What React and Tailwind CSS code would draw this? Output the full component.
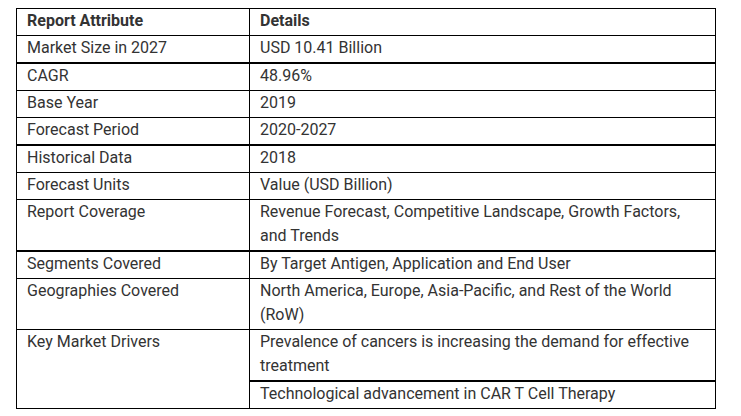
const rows = [
  { attr: "Market Size in 2027", detail: "USD 10.41 Billion", thick: true },
  { attr: "CAGR", detail: "48.96%" },
  { attr: "Base Year", detail: "2019" },
  { attr: "Forecast Period", detail: "2020-2027", thick: true },
  { attr: "Historical Data", detail: "2018" },
  { attr: "Forecast Units", detail: "Value (USD Billion)" },
  {
    attr: "Report Coverage",
    detail: "Revenue Forecast, Competitive Landscape, Growth Factors, and Trends",
    thick: true,
  },
  { attr: "Segments Covered", detail: "By Target Antigen, Application and End User" },
  {
    attr: "Geographies Covered",
    detail: "North America, Europe, Asia-Pacific, and Rest of the World (RoW)",
  },
];

export default function App() {
  return (
    <div
      className="min-h-[416px] w-[741px] bg-white pt-2 pl-4 text-base leading-6 text-[#333]"
      style={{ fontFamily: "Roboto, 'Liberation Sans', sans-serif" }}
    >
      <table className="w-[700px] table-fixed border-collapse border border-black">
        <colgroup>
          <col className="w-[233px]" />
          <col />
        </colgroup>
        <tbody>
          <tr>
            <th className="border border-black pt-0 pb-[2px] pl-2.5 text-left align-top font-bold">
              Report Attribute
            </th>
            <th className="border border-black pt-0 pb-[2px] pl-2.5 text-left align-top font-bold">
              Details
            </th>
          </tr>
          {rows.map((r) => (
            <tr key={r.attr}>
              <td
                className={`border border-black pt-0 pb-[2px] pl-2.5 align-top ${
                  r.thick ? "border-b-2" : ""
                }`}
              >
                {r.attr}
              </td>
              <td
                className={`border border-black pt-0 pb-[2px] pl-2.5 pr-2 align-top ${
                  r.thick ? "border-b-2" : ""
                }`}
              >
                {r.detail}
              </td>
            </tr>
          ))}
          <tr>
            <td rowSpan={2} className="border border-black pt-0 pb-[2px] pl-2.5 align-top">
              Key Market Drivers
            </td>
            <td className="border border-black border-b-2 pt-0 pb-[2px] pl-2.5 pr-2 align-top">
              Prevalence of cancers is increasing the demand for effective treatment
            </td>
          </tr>
          <tr>
            <td className="border border-black pt-0 pb-[2px] pl-2.5 pr-2 align-top">
              Technological advancement in CAR T Cell Therapy
            </td>
          </tr>
        </tbody>
      </table>
    </div>
  );
}
